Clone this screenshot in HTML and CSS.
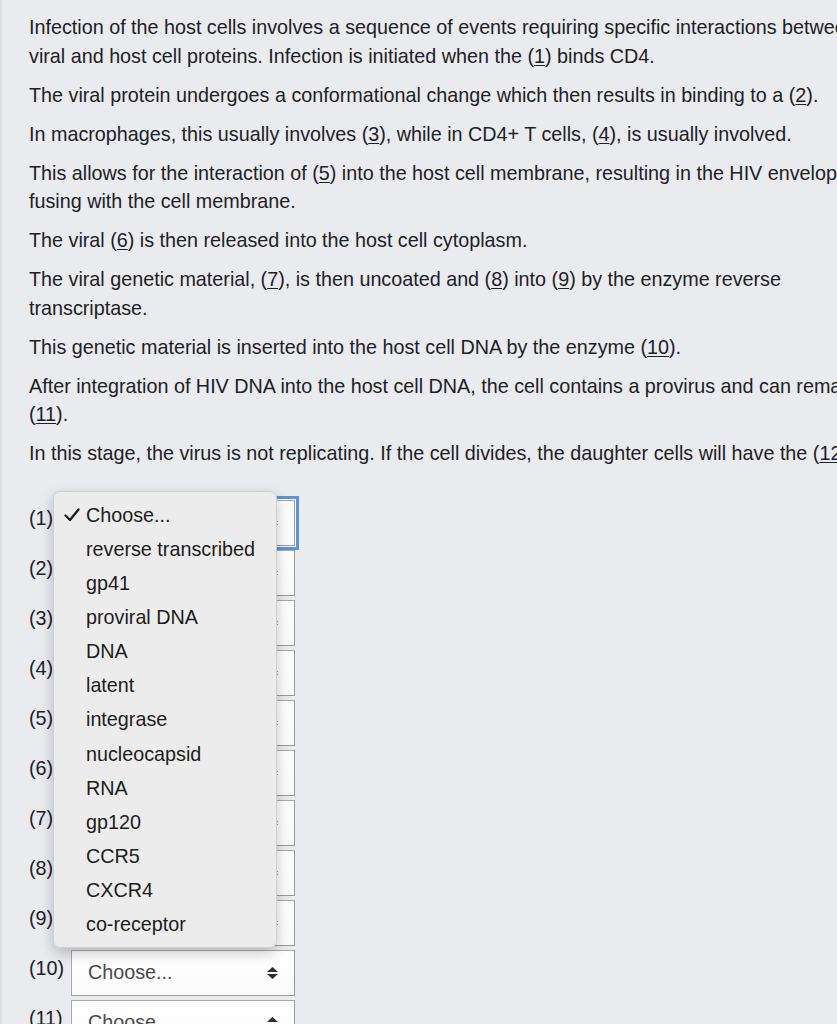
FILE: index.html
```html
<!DOCTYPE html>
<html lang="en">
<head>
<meta charset="utf-8">
<title>HIV infection – select missing words</title>
<link rel="stylesheet" href="styles.css">
</head>
<body>
<div class="page">
  <div class="text">
    <p>Infection of the host cells involves a sequence of events requiring specific interactions between viral and host cell proteins. Infection is initiated when the (<u>1</u>) binds CD4.</p>
    <p>The viral protein undergoes a conformational change which then results in binding to a (<u>2</u>).</p>
    <p>In macrophages, this usually involves (<u>3</u>), while in CD4+ T cells, (<u>4</u>), is usually involved.</p>
    <p>This allows for the interaction of (<u>5</u>) into the host cell membrane, resulting in the HIV envelope fusing with the cell membrane.</p>
    <p>The viral (<u>6</u>) is then released into the host cell cytoplasm.</p>
    <p>The viral genetic material, (<u>7</u>), is then uncoated and (<u>8</u>) into (<u>9</u>) by the enzyme reverse transcriptase.</p>
    <p>This genetic material is inserted into the host cell DNA by the enzyme (<u>10</u>).</p>
    <p>After integration of HIV DNA into the host cell DNA, the cell contains a provirus and can remain (<u>11</u>).</p>
    <p>In this stage, the virus is not replicating. If the cell divides, the daughter cells will have the (<u>12</u>).</p>
  </div>

  <div class="answers">
    <span class="lbl">(1)</span>
    <div class="sel focus"><span class="val">Choose...</span><svg class="arr" width="11" height="12" viewBox="0 0 11 12"><polygon points="0,5 5.5,0 11,5"/><polygon points="0,7 11,7 5.5,12"/></svg></div>
    <span class="lbl">(2)</span>
    <div class="sel"><span class="val">Choose...</span><svg class="arr" width="11" height="12" viewBox="0 0 11 12"><polygon points="0,5 5.5,0 11,5"/><polygon points="0,7 11,7 5.5,12"/></svg></div>
    <span class="lbl">(3)</span>
    <div class="sel"><span class="val">Choose...</span><svg class="arr" width="11" height="12" viewBox="0 0 11 12"><polygon points="0,5 5.5,0 11,5"/><polygon points="0,7 11,7 5.5,12"/></svg></div>
    <span class="lbl">(4)</span>
    <div class="sel"><span class="val">Choose...</span><svg class="arr" width="11" height="12" viewBox="0 0 11 12"><polygon points="0,5 5.5,0 11,5"/><polygon points="0,7 11,7 5.5,12"/></svg></div>
    <span class="lbl">(5)</span>
    <div class="sel"><span class="val">Choose...</span><svg class="arr" width="11" height="12" viewBox="0 0 11 12"><polygon points="0,5 5.5,0 11,5"/><polygon points="0,7 11,7 5.5,12"/></svg></div>
    <span class="lbl">(6)</span>
    <div class="sel"><span class="val">Choose...</span><svg class="arr" width="11" height="12" viewBox="0 0 11 12"><polygon points="0,5 5.5,0 11,5"/><polygon points="0,7 11,7 5.5,12"/></svg></div>
    <span class="lbl">(7)</span>
    <div class="sel"><span class="val">Choose...</span><svg class="arr" width="11" height="12" viewBox="0 0 11 12"><polygon points="0,5 5.5,0 11,5"/><polygon points="0,7 11,7 5.5,12"/></svg></div>
    <span class="lbl">(8)</span>
    <div class="sel"><span class="val">Choose...</span><svg class="arr" width="11" height="12" viewBox="0 0 11 12"><polygon points="0,5 5.5,0 11,5"/><polygon points="0,7 11,7 5.5,12"/></svg></div>
    <span class="lbl">(9)</span>
    <div class="sel"><span class="val">Choose...</span><svg class="arr" width="11" height="12" viewBox="0 0 11 12"><polygon points="0,5 5.5,0 11,5"/><polygon points="0,7 11,7 5.5,12"/></svg></div>
    <span class="lbl">(10)</span>
    <div class="sel"><span class="val">Choose...</span><svg class="arr" width="11" height="12" viewBox="0 0 11 12"><polygon points="0,5 5.5,0 11,5"/><polygon points="0,7 11,7 5.5,12"/></svg></div>
    <span class="lbl">(11)</span>
    <div class="sel"><span class="val">Choose...</span><svg class="arr" width="11" height="12" viewBox="0 0 11 12"><polygon points="0,5 5.5,0 11,5"/><polygon points="0,7 11,7 5.5,12"/></svg></div>
    <span class="lbl">(12)</span>
    <div class="sel"><span class="val">Choose...</span><svg class="arr" width="11" height="12" viewBox="0 0 11 12"><polygon points="0,5 5.5,0 11,5"/><polygon points="0,7 11,7 5.5,12"/></svg></div>

    <ul class="menu">
      <li class="checked"><svg class="check" width="16" height="14" viewBox="0 0 16 14"><polyline points="1.5,7.5 6,12 14.5,1.5"/></svg>Choose...</li>
      <li>reverse transcribed</li>
      <li>gp41</li>
      <li>proviral DNA</li>
      <li>DNA</li>
      <li>latent</li>
      <li>integrase</li>
      <li>nucleocapsid</li>
      <li>RNA</li>
      <li>gp120</li>
      <li>CCR5</li>
      <li>CXCR4</li>
      <li>co-receptor</li>
    </ul>
  </div>
</div>
</body>
</html>
```

FILE: styles.css
```css
html, body {
  margin: 0;
  padding: 0;
  overflow: hidden;
  background: #e9ebef;
}

body {
  font-family: "Liberation Sans", Arial, Helvetica, sans-serif;
  font-size: 19.75px;
  color: #1d2125;
}

.page {
  width: 851px;
  border-left: 2px solid #dcdee2;
  padding: 13px 0 40px 27px;
}

.text p {
  margin: 0 0 10.5px 0;
  line-height: 28.5px;
}

.text u {
  text-decoration-thickness: 1px;
  text-underline-offset: 2px;
}

.answers {
  position: relative;
  display: grid;
  grid-template-columns: 42px 224px;
  grid-auto-rows: 46px;
  row-gap: 4px;
  margin-top: 32px;
}

.lbl {
  padding-top: 4px;
  line-height: 28.5px;
  color: #1d2125;
}

.sel {
  box-sizing: border-box;
  height: 46px;
  background: linear-gradient(#ffffff, #fbfbfb);
  border: 1px solid #a9a9a9;
  border-right-color: #999;
  border-bottom-color: #999;
  display: flex;
  align-items: center;
  justify-content: space-between;
  padding: 0 16px 0 16px;
  color: #4a4a4a;
}

.sel.focus {
  box-shadow: 0 0 0 1px #ffffff, 0 0 0 4px #5b93dc;
}

.arr {
  fill: #2e2e2e;
}

.menu {
  position: absolute;
  left: 24px;
  top: -9px;
  width: 224px;
  height: 457px;
  box-sizing: border-box;
  margin: 0;
  padding: 6px 0 0 0;
  list-style: none;
  background: #ececec;
  border: 1px solid #cfcfcf;
  border-radius: 7px;
  box-shadow: 0 5px 14px rgba(0, 0, 0, 0.22);
  color: #1c1c1c;
}

.menu li {
  position: relative;
  height: 34.17px;
  line-height: 34.17px;
  padding-left: 32px;
  white-space: nowrap;
}

.check {
  position: absolute;
  left: 10px;
  top: 10px;
  fill: none;
  stroke: #1c1c1c;
  stroke-width: 2.3;
  stroke-linecap: round;
  stroke-linejoin: round;
}
```
